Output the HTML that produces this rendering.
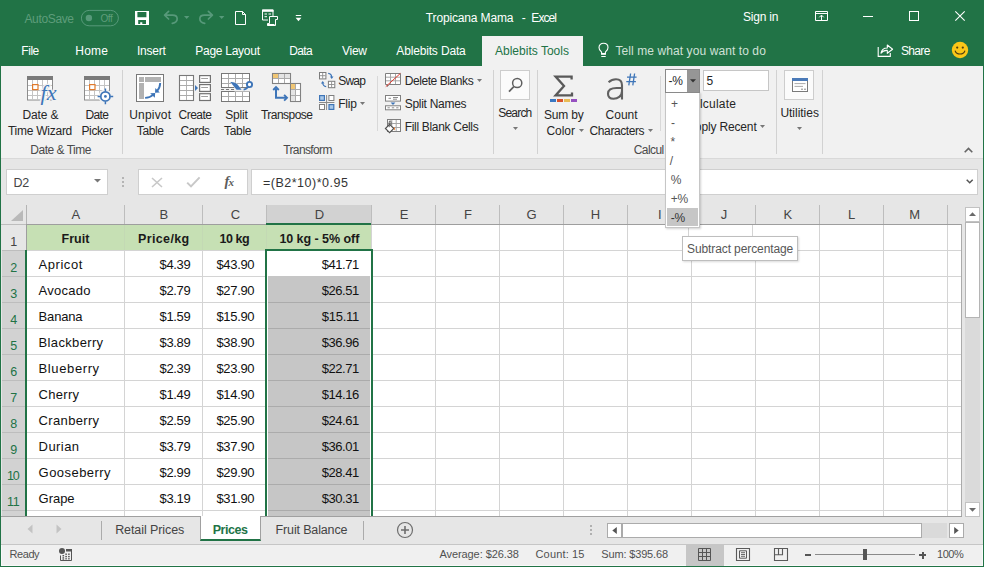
<!DOCTYPE html>
<html><head><meta charset="utf-8"><title>Excel</title>
<style>
html,body{margin:0;padding:0;}
body{width:984px;height:567px;overflow:hidden;position:relative;background:#f1f1f1;font-family:'Liberation Sans', sans-serif;}
.t{position:absolute;white-space:pre;}
.a{position:absolute;}
svg{position:absolute;overflow:visible;}
</style></head><body>
<div class="a" style="left:0px;top:0px;width:984px;height:567px;background:#217346;"></div>
<div class="a" style="left:1px;top:66px;width:982px;height:92px;background:#f1f1f1;"></div>
<div class="a" style="left:482px;top:36px;width:101px;height:31px;background:#f1f1f1;"></div>
<div class="a" style="left:1px;top:158px;width:982px;height:1px;background:#d9d9d9;"></div>
<div class="a" style="left:1px;top:159px;width:982px;height:358px;background:#e6e6e6;"></div>
<div class="a" style="left:6px;top:169px;width:102px;height:26px;background:#fff;border:1px solid #cfcfcf;box-sizing:border-box;"></div>
<div class="a" style="left:138px;top:169px;width:110px;height:26px;background:#fff;border:1px solid #cfcfcf;box-sizing:border-box;"></div>
<div class="a" style="left:251px;top:169px;width:727px;height:26px;background:#fff;border:1px solid #cfcfcf;box-sizing:border-box;"></div>
<div class="a" style="left:26px;top:225px;width:935px;height:291px;background:#fff;"></div>
<div class="a" style="left:26px;top:225px;width:345px;height:25px;background:#c6e0b4;"></div>
<div class="a" style="left:266px;top:205px;width:105px;height:19px;background:#d2d2d2;"></div>
<div class="a" style="left:2px;top:251px;width:24px;height:265px;background:#d2d2d2;"></div>
<div class="a" style="left:124px;top:225px;width:1px;height:291px;background:#d4d4d4;"></div>
<div class="a" style="left:124px;top:205px;width:1px;height:19px;background:#bdbdbd;"></div>
<div class="a" style="left:202px;top:225px;width:1px;height:291px;background:#d4d4d4;"></div>
<div class="a" style="left:202px;top:205px;width:1px;height:19px;background:#bdbdbd;"></div>
<div class="a" style="left:266px;top:225px;width:1px;height:291px;background:#d4d4d4;"></div>
<div class="a" style="left:266px;top:205px;width:1px;height:19px;background:#bdbdbd;"></div>
<div class="a" style="left:371px;top:225px;width:1px;height:291px;background:#d4d4d4;"></div>
<div class="a" style="left:371px;top:205px;width:1px;height:19px;background:#bdbdbd;"></div>
<div class="a" style="left:435px;top:225px;width:1px;height:291px;background:#d4d4d4;"></div>
<div class="a" style="left:435px;top:205px;width:1px;height:19px;background:#bdbdbd;"></div>
<div class="a" style="left:499px;top:225px;width:1px;height:291px;background:#d4d4d4;"></div>
<div class="a" style="left:499px;top:205px;width:1px;height:19px;background:#bdbdbd;"></div>
<div class="a" style="left:563px;top:225px;width:1px;height:291px;background:#d4d4d4;"></div>
<div class="a" style="left:563px;top:205px;width:1px;height:19px;background:#bdbdbd;"></div>
<div class="a" style="left:627px;top:225px;width:1px;height:291px;background:#d4d4d4;"></div>
<div class="a" style="left:627px;top:205px;width:1px;height:19px;background:#bdbdbd;"></div>
<div class="a" style="left:691px;top:225px;width:1px;height:291px;background:#d4d4d4;"></div>
<div class="a" style="left:691px;top:205px;width:1px;height:19px;background:#bdbdbd;"></div>
<div class="a" style="left:755px;top:225px;width:1px;height:291px;background:#d4d4d4;"></div>
<div class="a" style="left:755px;top:205px;width:1px;height:19px;background:#bdbdbd;"></div>
<div class="a" style="left:819px;top:225px;width:1px;height:291px;background:#d4d4d4;"></div>
<div class="a" style="left:819px;top:205px;width:1px;height:19px;background:#bdbdbd;"></div>
<div class="a" style="left:883px;top:225px;width:1px;height:291px;background:#d4d4d4;"></div>
<div class="a" style="left:883px;top:205px;width:1px;height:19px;background:#bdbdbd;"></div>
<div class="a" style="left:947px;top:225px;width:1px;height:291px;background:#d4d4d4;"></div>
<div class="a" style="left:947px;top:205px;width:1px;height:19px;background:#bdbdbd;"></div>
<div class="a" style="left:26px;top:250px;width:935px;height:1px;background:#d4d4d4;"></div>
<div class="a" style="left:2px;top:250px;width:24px;height:1px;background:#bdbdbd;"></div>
<div class="a" style="left:26px;top:276px;width:935px;height:1px;background:#d4d4d4;"></div>
<div class="a" style="left:2px;top:276px;width:24px;height:1px;background:#bdbdbd;"></div>
<div class="a" style="left:26px;top:302px;width:935px;height:1px;background:#d4d4d4;"></div>
<div class="a" style="left:2px;top:302px;width:24px;height:1px;background:#bdbdbd;"></div>
<div class="a" style="left:26px;top:328px;width:935px;height:1px;background:#d4d4d4;"></div>
<div class="a" style="left:2px;top:328px;width:24px;height:1px;background:#bdbdbd;"></div>
<div class="a" style="left:26px;top:354px;width:935px;height:1px;background:#d4d4d4;"></div>
<div class="a" style="left:2px;top:354px;width:24px;height:1px;background:#bdbdbd;"></div>
<div class="a" style="left:26px;top:380px;width:935px;height:1px;background:#d4d4d4;"></div>
<div class="a" style="left:2px;top:380px;width:24px;height:1px;background:#bdbdbd;"></div>
<div class="a" style="left:26px;top:406px;width:935px;height:1px;background:#d4d4d4;"></div>
<div class="a" style="left:2px;top:406px;width:24px;height:1px;background:#bdbdbd;"></div>
<div class="a" style="left:26px;top:432px;width:935px;height:1px;background:#d4d4d4;"></div>
<div class="a" style="left:2px;top:432px;width:24px;height:1px;background:#bdbdbd;"></div>
<div class="a" style="left:26px;top:458px;width:935px;height:1px;background:#d4d4d4;"></div>
<div class="a" style="left:2px;top:458px;width:24px;height:1px;background:#bdbdbd;"></div>
<div class="a" style="left:26px;top:484px;width:935px;height:1px;background:#d4d4d4;"></div>
<div class="a" style="left:2px;top:484px;width:24px;height:1px;background:#bdbdbd;"></div>
<div class="a" style="left:26px;top:510px;width:935px;height:1px;background:#d4d4d4;"></div>
<div class="a" style="left:2px;top:510px;width:24px;height:1px;background:#bdbdbd;"></div>
<div class="a" style="left:124px;top:225px;width:1px;height:25px;background:#c3d9b4;"></div>
<div class="a" style="left:202px;top:225px;width:1px;height:25px;background:#c3d9b4;"></div>
<div class="a" style="left:266px;top:225px;width:1px;height:25px;background:#c3d9b4;"></div>
<div class="a" style="left:686px;top:225px;width:74px;height:11px;background:#fff;"></div>
<div class="a" style="left:688px;top:225px;width:1px;height:11px;background:#d4d4d4;"></div>
<div class="a" style="left:752px;top:225px;width:1px;height:11px;background:#d4d4d4;"></div>
<div class="a" style="left:1px;top:224px;width:25px;height:1px;background:#bdbdbd;"></div>
<div class="a" style="left:26px;top:224px;width:935px;height:1px;background:#9e9e9e;"></div>
<div class="a" style="left:26px;top:205px;width:1px;height:19px;background:#b4b4b4;"></div>
<div class="a" style="left:26px;top:224px;width:1px;height:292px;background:#9e9e9e;"></div>
<div class="a" style="left:961px;top:224px;width:1px;height:293px;background:#ababab;"></div>
<div class="a" style="left:1px;top:516px;width:982px;height:1px;background:#a0a0a0;"></div>
<div class="a" style="left:267px;top:251px;width:1px;height:265px;background:#fff;"></div>
<div class="a" style="left:370px;top:251px;width:1px;height:265px;background:#fff;"></div>
<div class="a" style="left:268px;top:276px;width:102px;height:240px;background:#c6c6c6;"></div>
<div class="a" style="left:268px;top:302px;width:102px;height:1px;background:#ababab;"></div>
<div class="a" style="left:268px;top:328px;width:102px;height:1px;background:#ababab;"></div>
<div class="a" style="left:268px;top:354px;width:102px;height:1px;background:#ababab;"></div>
<div class="a" style="left:268px;top:380px;width:102px;height:1px;background:#ababab;"></div>
<div class="a" style="left:268px;top:406px;width:102px;height:1px;background:#ababab;"></div>
<div class="a" style="left:268px;top:432px;width:102px;height:1px;background:#ababab;"></div>
<div class="a" style="left:268px;top:458px;width:102px;height:1px;background:#ababab;"></div>
<div class="a" style="left:268px;top:484px;width:102px;height:1px;background:#ababab;"></div>
<div class="a" style="left:268px;top:510px;width:102px;height:1px;background:#ababab;"></div>
<div class="a" style="left:268px;top:536px;width:102px;height:1px;background:#ababab;"></div>
<div class="a" style="left:265px;top:249px;width:107px;height:2px;background:#217346;"></div>
<div class="a" style="left:265px;top:249px;width:2px;height:267px;background:#217346;"></div>
<div class="a" style="left:371px;top:249px;width:2px;height:267px;background:#217346;"></div>
<div class="a" style="left:266px;top:223px;width:105px;height:2px;background:#217346;"></div>
<div class="a" style="left:25px;top:250px;width:2px;height:266px;background:#217346;"></div>
<svg style="left:11px;top:210px" width="12" height="11"><path d="M12 0V11H0Z" fill="#b9b9b9"/></svg>
<div class="a" style="left:962px;top:205px;width:21px;height:312px;background:#e6e6e6;"></div>
<div class="a" style="left:965px;top:207px;width:15px;height:15px;background:#fff;border:1px solid #c2c2c2;box-sizing:border-box;"></div>
<svg style="left:969px;top:212px" width="7" height="4"><path d="M0 4L3.5 0.2L7 4Z" fill="#6a6a6a"/></svg>
<div class="a" style="left:965px;top:222px;width:15px;height:96px;background:#fff;border:1px solid #b4b4b4;box-sizing:border-box;"></div>
<div class="a" style="left:965px;top:318px;width:15px;height:184px;background:#dadada;"></div>
<div class="a" style="left:965px;top:502px;width:15px;height:15px;background:#fff;border:1px solid #c2c2c2;box-sizing:border-box;"></div>
<svg style="left:969px;top:508px" width="7" height="4"><path d="M0 0L3.5 3.8L7 0Z" fill="#6a6a6a"/></svg>
<div class="a" style="left:1px;top:517px;width:982px;height:27px;background:#e6e6e6;"></div>
<div class="a" style="left:1px;top:544px;width:982px;height:1px;background:#c6c6c6;"></div>
<div class="a" style="left:1px;top:545px;width:982px;height:21px;background:#f0f0f0;"></div>
<div class="a" style="left:1px;top:565px;width:982px;height:1px;background:#f9f9f9;"></div>
<div class="a" style="left:1px;top:545px;width:1px;height:21px;background:#f9f9f9;"></div>
<div class="a" style="left:982px;top:545px;width:1px;height:21px;background:#f9f9f9;"></div>
<svg style="left:27px;top:524px" width="6" height="10"><path d="M5.5 0.5V9.5L0.5 5Z" fill="#c3c3c3"/></svg>
<svg style="left:56px;top:524px" width="6" height="10"><path d="M0.5 0.5V9.5L5.5 5Z" fill="#c3c3c3"/></svg>
<div class="a" style="left:101px;top:521px;width:1px;height:19px;background:#ababab;"></div>
<div class="a" style="left:363px;top:521px;width:1px;height:19px;background:#ababab;"></div>
<div class="a" style="left:200px;top:516px;width:61px;height:25px;background:#fff;border-left:1px solid #a0a0a0;border-right:1px solid #a0a0a0;border-bottom:2px solid #217346;box-sizing:border-box;"></div>
<svg style="left:396px;top:521px" width="18" height="18"><circle cx="9" cy="9" r="7.5" fill="none" stroke="#6e6e6e" stroke-width="1.2"/><path d="M9 5V13M5 9H13" stroke="#6e6e6e" stroke-width="1.6" fill="none"/></svg>
<svg style="left:590px;top:525px" width="3" height="11"><rect x="0" y="0" width="2" height="2" fill="#b0b0b0"/><rect x="0" y="4" width="2" height="2" fill="#b0b0b0"/><rect x="0" y="8" width="2" height="2" fill="#b0b0b0"/></svg>
<div class="a" style="left:607px;top:523px;width:15px;height:15px;background:#fff;border:1px solid #ababab;box-sizing:border-box;"></div>
<svg style="left:612px;top:527px" width="5" height="7"><path d="M4.8 0V7L0.3 3.5Z" fill="#555"/></svg>
<div class="a" style="left:622px;top:523px;width:300px;height:15px;background:#fff;border:1px solid #ababab;box-sizing:border-box;"></div>
<div class="a" style="left:922px;top:523px;width:25px;height:15px;background:#dadada;"></div>
<div class="a" style="left:949px;top:523px;width:15px;height:15px;background:#fff;border:1px solid #ababab;box-sizing:border-box;"></div>
<svg style="left:954px;top:527px" width="5" height="7"><path d="M0.2 0V7L4.7 3.5Z" fill="#555"/></svg>
<svg style="left:59px;top:548px" width="13" height="13"><circle cx="3" cy="3" r="3" fill="#555"/><path d="M7.5 1.5H12.5V12.5H1.5V7.5" fill="none" stroke="#555" stroke-width="1"/><rect x="7" y="1" width="6" height="2.5" fill="#555"/>
<g fill="#555"><rect x="3.5" y="7" width="1.6" height="1.4"/><rect x="6.3" y="5.5" width="1.6" height="1.4"/><rect x="9.1" y="5.5" width="1.6" height="1.4"/><rect x="3.5" y="9.2" width="1.6" height="1.4"/><rect x="6.3" y="7.9" width="1.6" height="1.4"/><rect x="9.1" y="7.9" width="1.6" height="1.4"/><rect x="6.3" y="10.2" width="1.6" height="1.2"/><rect x="9.1" y="10.2" width="1.6" height="1.2"/><rect x="3.5" y="10.9" width="1.6" height="0.8"/></g></svg>
<div class="a" style="left:686px;top:545px;width:38px;height:21px;background:#c6c6c6;"></div>
<svg style="left:698px;top:548px" width="13" height="13"><path d="M0.5 0.5H12.5V12.5H0.5ZM4.5 0.5V12.5M8.5 0.5V12.5M0.5 4.5H12.5M0.5 8.5H12.5" fill="none" stroke="#555" stroke-width="1"/></svg>
<svg style="left:736px;top:548px" width="14" height="13"><path d="M0.5 0.5H13.5V12.5H0.5Z" fill="none" stroke="#5a5a5a" stroke-width="1.1"/><path d="M3.5 2.8H10.5V10.2H3.5Z" fill="none" stroke="#5a5a5a"/><path d="M5 4.7H9M5 6.5H9M5 8.3H9" stroke="#5a5a5a" stroke-width="0.9"/></svg>
<svg style="left:774px;top:548px" width="14" height="13"><path d="M0.5 0.5H13.5V12.5H0.5Z" fill="none" stroke="#5a5a5a" stroke-width="1.1"/><path d="M4.5 0.5V6.8M8.5 0.5V6.8H0.5" fill="none" stroke="#5a5a5a" stroke-width="1.1"/></svg>
<div class="a" style="left:805px;top:554px;width:6px;height:2px;background:#555;"></div>
<div class="a" style="left:815px;top:554px;width:100px;height:1px;background:#8a8a8a;"></div>
<div class="a" style="left:863px;top:549px;width:4px;height:11px;background:#555;"></div>
<div class="a" style="left:919px;top:554px;width:7px;height:2px;background:#555;"></div>
<div class="a" style="left:921.5px;top:551.5px;width:2px;height:7px;background:#555;"></div>
<svg style="left:80px;top:9px" width="40" height="18" viewBox="0 0 40 18"><rect x="1.4" y="1.4" width="37" height="15.4" rx="7.7" fill="none" stroke="#57997a" stroke-width="1"/><circle cx="8.9" cy="9" r="3.2" fill="#57997a"/></svg>
<svg style="left:135px;top:11px" width="14" height="14" viewBox="0 0 14 14"><path d="M0 0H14V14H0Z M2.4 1V6.3H11.4V1Z M3.2 9V13H5.2V11.3H7.3V13H11V9Z" fill="#fff" fill-rule="evenodd"/></svg>
<svg style="left:163px;top:10px" width="16" height="15" viewBox="0 0 16 15"><path d="M5.6 1.4L1.6 5.2L5.6 9M1.8 5.2H9.5C15.5 5.2 16 12.2 9.3 13.4" fill="none" stroke="#57997a" stroke-width="1.7" stroke-linecap="round" stroke-linejoin="round"/></svg>
<svg style="left:184px;top:16px" width="5.4" height="3" viewBox="0 0 5.4 3"><path d="M0 0H5.4L2.7 3Z" fill="#57997a"/></svg>
<svg style="left:198px;top:10px" width="16" height="15" viewBox="0 0 16 15"><path d="M10.4 1.4L14.4 5.2L10.4 9M14.2 5.2H6.5C0.5 5.2 0 12.2 6.7 13.4" fill="none" stroke="#57997a" stroke-width="1.7" stroke-linecap="round" stroke-linejoin="round"/></svg>
<svg style="left:219px;top:16px" width="5.4" height="3" viewBox="0 0 5.4 3"><path d="M0 0H5.4L2.7 3Z" fill="#57997a"/></svg>
<svg style="left:234px;top:11px" width="13" height="15" viewBox="0 0 13 15"><path d="M1.5 0.5H8.5L11.5 3.5V13.5H1.5Z M8.5 0.5V3.5H11.5" fill="none" stroke="#fff" stroke-width="1"/></svg>
<svg style="left:262px;top:9px" width="17" height="18" viewBox="0 0 17 18"><path d="M0.5 1H11V11H0.5Z" fill="none" stroke="#fff" stroke-width="1"/><rect x="0" y="0.6" width="11.5" height="2.2" fill="#fff"/><path d="M2.5 5H5M6.5 5H9M2.5 7.7H5" stroke="#fff" stroke-width="1" fill="none"/><rect x="6" y="7" width="10" height="10" fill="#217346"/><path d="M7.5 7.5H15.5V10.5H13.5V16.5H5.5V14.5H7.5Z" fill="#217346" stroke="#fff" stroke-width="1"/><rect x="5.5" y="15" width="7" height="1.8" fill="#fff"/></svg>
<svg style="left:295px;top:14px" width="7" height="8" viewBox="0 0 7 8"><rect x="0.8" y="1" width="5.4" height="1" fill="#fff"/><path d="M0.6 3.8H6.4L3.5 7.2Z" fill="#fff"/></svg>
<svg style="left:815px;top:11px" width="13" height="10" viewBox="0 0 13 10"><path d="M0.5 0.5H12.5V9.5H0.5Z" fill="none" stroke="#fff"/><path d="M0.5 2.5H12.5" stroke="#fff"/><path d="M6.5 9V4.3M4.3 6.3L6.5 4.1L8.7 6.3" stroke="#fff" fill="none"/></svg>
<div class="a" style="left:863px;top:16px;width:10px;height:1px;background:#fff;"></div>
<div class="a" style="left:909px;top:11px;width:10px;height:10px;background:transparent;border:1px solid #fff;box-sizing:border-box;"></div>
<svg style="left:955px;top:11px" width="10" height="10" viewBox="0 0 10 10"><path d="M0.3 0.3L9.7 9.7M9.7 0.3L0.3 9.7" stroke="#fff" stroke-width="1.1" fill="none"/></svg>
<svg style="left:598px;top:42px" width="11" height="16" viewBox="0 0 11 16"><path d="M3.6 11.6V10.2C2.6 8.8 1 7.8 1 5.4C1 2.9 3 1.3 5.5 1.3C8 1.3 10 2.9 10 5.4C10 7.8 8.4 8.8 7.4 10.2V11.6Z" fill="none" stroke="#fff" stroke-width="1.1"/><rect x="3.1" y="11" width="4.8" height="1.8" fill="#fff"/><rect x="3.3" y="14" width="4.4" height="1" fill="#fff"/></svg>
<svg style="left:877px;top:43px" width="17" height="15" viewBox="0 0 17 15"><path d="M1.2 4V13.4H13.3V10" fill="none" stroke="#fff" stroke-width="1.1"/><path d="M4 10.2C4.5 6.8 7 5 10.3 5V2L15.6 6.2L10.3 10.3V7.4C7.6 7.2 5.5 8 4 10.2Z" fill="none" stroke="#fff" stroke-width="1.1" stroke-linejoin="round"/></svg>
<svg style="left:951px;top:41px" width="18" height="18" viewBox="0 0 18 18"><circle cx="9" cy="9" r="8.2" fill="#fbc718"/><circle cx="6.2" cy="6.6" r="1.1" fill="#4d3d12"/><circle cx="11.8" cy="6.6" r="1.1" fill="#4d3d12"/><path d="M4.2 10C5.5 14 12.5 14 13.8 10" fill="none" stroke="#4d3d12" stroke-width="1.1" stroke-linecap="round"/></svg>
<div class="a" style="left:122px;top:70px;width:1px;height:84px;background:#d2d2d2;"></div>
<div class="a" style="left:493px;top:70px;width:1px;height:84px;background:#d2d2d2;"></div>
<div class="a" style="left:537px;top:70px;width:1px;height:84px;background:#d2d2d2;"></div>
<div class="a" style="left:776px;top:70px;width:1px;height:84px;background:#d2d2d2;"></div>
<div class="a" style="left:822px;top:70px;width:1px;height:84px;background:#d2d2d2;"></div>
<div class="a" style="left:377px;top:76px;width:1px;height:55px;background:#d8d8d8;"></div>
<div class="a" style="left:660px;top:76px;width:1px;height:55px;background:#d8d8d8;"></div>
<svg style="left:964px;top:147px" width="9" height="6" viewBox="0 0 9 6"><path d="M0.7 5.3L4.5 1.5L8.3 5.3" fill="none" stroke="#666" stroke-width="1.6"/></svg>
<svg style="left:27px;top:76px" width="30" height="29" viewBox="0 0 30 29"><rect x="0.5" y="0.5" width="25" height="23.5" fill="#fff" stroke="#8c8c8c"/><rect x="0" y="0" width="26" height="4" fill="#7a7a7a"/><path d="M5.5 4V24" stroke="#c4c4c4"/><path d="M10.5 4V24" stroke="#c4c4c4"/><path d="M15.5 4V24" stroke="#c4c4c4"/><path d="M20.5 4V24" stroke="#c4c4c4"/><path d="M1 9.5H25" stroke="#c4c4c4"/><path d="M1 14.5H25" stroke="#c4c4c4"/><path d="M1 19.5H25" stroke="#c4c4c4"/><rect x="5.6" y="8.6" width="5.4" height="5" fill="#fff" stroke="#e07a2c" stroke-width="1.2"/><text x="13.5" y="23.6" textLength="16" lengthAdjust="spacingAndGlyphs" font-family="Liberation Serif" font-style="italic" font-size="20.5" fill="#3e75b8" stroke="#f1f1f1" stroke-width="2.6" stroke-linejoin="round">fx</text><text x="13.5" y="23.6" textLength="16" lengthAdjust="spacingAndGlyphs" font-family="Liberation Serif" font-style="italic" font-size="20.5" fill="#3e75b8">fx</text></svg>
<svg style="left:84px;top:76px" width="30" height="29" viewBox="0 0 30 29"><rect x="0.5" y="0.5" width="25" height="23.5" fill="#fff" stroke="#8c8c8c"/><rect x="0" y="0" width="26" height="4" fill="#7a7a7a"/><path d="M5.5 4V24" stroke="#c4c4c4"/><path d="M10.5 4V24" stroke="#c4c4c4"/><path d="M15.5 4V24" stroke="#c4c4c4"/><path d="M20.5 4V24" stroke="#c4c4c4"/><path d="M1 9.5H25" stroke="#c4c4c4"/><path d="M1 14.5H25" stroke="#c4c4c4"/><path d="M1 19.5H25" stroke="#c4c4c4"/><rect x="5.6" y="8.6" width="5.4" height="5" fill="#fff" stroke="#e07a2c" stroke-width="1.2"/><circle cx="21.4" cy="20.4" r="7" fill="#f1f1f1"/><circle cx="21.4" cy="20.4" r="4.6" fill="#fff" stroke="#3e75b8" stroke-width="1.7"/><circle cx="21.4" cy="20.4" r="1.4" fill="#3e75b8"/><path d="M21.4 12.6V15.6M21.4 25.2V28.2M13.6 20.4H16.6M26.2 20.4H29.2" stroke="#3e75b8" stroke-width="1.5"/></svg>
<svg style="left:136px;top:74px" width="28" height="28" viewBox="0 0 28 28"><rect x="0.5" y="0.5" width="27" height="27" fill="#fff" stroke="#787878"/><rect x="3" y="3" width="5" height="5" fill="#b2b2b2"/><rect x="9" y="3" width="16" height="5" fill="#b2b2b2"/><rect x="3" y="9" width="5" height="16" fill="#b2b2b2"/><path d="M9.1 23.9C12.5 23.7 15.2 22.6 17 20.8" fill="none" stroke="#3e75b8" stroke-width="1.9"/><path d="M19.2 18.9L14.2 19.3L18.8 23.7Z" fill="#3e75b8"/><path d="M24.2 9C24 12.6 23 15 21.2 16.8" fill="none" stroke="#3e75b8" stroke-width="1.9"/><path d="M19 18.8L19.3 14L23.8 18.4Z" fill="#3e75b8"/></svg>
<svg style="left:179px;top:75px" width="32" height="26" viewBox="0 0 32 26"><rect x="0.5" y="0.5" width="14" height="25" fill="#fff" stroke="#787878" stroke-width="1.1"/><path d="M7.5 1V25" stroke="#b4b4b4"/><path d="M1 5.5H14" stroke="#ababab"/><path d="M1 10.5H14" stroke="#ababab"/><path d="M1 15.5H14" stroke="#ababab"/><path d="M1 20.5H14" stroke="#ababab"/><path d="M16 10V16L19 13Z" fill="#3e75b8"/><rect x="20.6" y="0.6" width="10.8" height="6.8" fill="#fff" stroke="#727272" stroke-width="1.2"/><path d="M22.2 3.5H29" stroke="#a0a0a0"/><rect x="20.6" y="9.6" width="10.8" height="6.8" fill="#fff" stroke="#727272" stroke-width="1.2"/><path d="M22.2 12.5H29" stroke="#a0a0a0"/><rect x="20.6" y="18.7" width="10.8" height="6.8" fill="#fff" stroke="#727272" stroke-width="1.2"/><path d="M22.2 21.5H29" stroke="#a0a0a0"/></svg>
<svg style="left:221px;top:73px" width="32" height="29" viewBox="0 0 32 29"><rect x="0.5" y="0.5" width="28" height="14" fill="#fff" stroke="#787878"/><path d="M7.5 1V14" stroke="#ababab"/><path d="M7.5 19V28" stroke="#ababab"/><path d="M14.5 1V14" stroke="#ababab"/><path d="M14.5 19V28" stroke="#ababab"/><path d="M21.5 1V14" stroke="#ababab"/><path d="M21.5 19V28" stroke="#ababab"/><path d="M1 5.5H28M1 10.5H28" stroke="#ababab"/><rect x="0.5" y="18.5" width="28" height="10" fill="#fff" stroke="#787878"/><path d="M1 23.5H28" stroke="#ababab"/><path d="M7.5 19V28" stroke="#ababab"/><path d="M14.5 19V28" stroke="#ababab"/><path d="M21.5 19V28" stroke="#ababab"/><rect x="13.5" y="15" width="16" height="3.5" fill="#f1f1f1"/><path d="M0 16.5H13" stroke="#787878" stroke-width="1.1" stroke-dasharray="3 2"/><path d="M9.3 9C12.5 8.8 15 10 16.5 11.6L20.6 16.7L15.6 16.8Z" fill="#3e75b8" stroke="#f4f4f4" stroke-width="1" paint-order="stroke"/><path d="M22.6 16.6C25 16.4 26.3 15.3 27 13.5" stroke="#3e75b8" stroke-width="1.8" fill="none"/><circle cx="28.5" cy="11.5" r="2.6" fill="#fff" stroke="#3e75b8" stroke-width="1.9"/></svg>
<svg style="left:272px;top:73px" width="30" height="29" viewBox="0 0 30 29"><rect x="0.5" y="0.5" width="18" height="10" fill="#fff" stroke="#828282" stroke-width="1.1"/><rect x="1" y="1" width="5.2" height="4.2" fill="#f0c674"/><rect x="7" y="1" width="11" height="4.2" fill="#e4e4e4"/><path d="M6.5 1V10M12.5 1V10M1 5.5H18" stroke="#ababab"/><rect x="18.5" y="10.5" width="10" height="18" fill="#fff" stroke="#828282" stroke-width="1.1"/><rect x="19" y="11" width="4.2" height="5.2" fill="#f0c674"/><rect x="19" y="17" width="4.2" height="11" fill="#e4e4e4"/><path d="M23.5 11V28M19 16.5H28M19 22.5H28" stroke="#ababab"/><path d="M4 15.4V24.8H14.2" fill="none" stroke="#3e75b8" stroke-width="2"/><path d="M1.2 17L4 14.2L6.8 17M12.1 21.9L15 24.8L12.1 27.7" fill="none" stroke="#3e75b8" stroke-width="1.9"/></svg>
<svg style="left:319px;top:72px" width="16" height="16" viewBox="0 0 16 16"><rect x="0.5" y="0.5" width="6.4" height="6.4" fill="#fff" stroke="#7c7c7c"/><path d="M3.7 1V6.5M1 3.7H6.5" stroke="#8c8c8c" stroke-width="0.9"/><rect x="9.4" y="9.3" width="6.4" height="6.4" fill="#fff" stroke="#7c7c7c"/><path d="M12.6 9.8V15.3M9.9 12.5H15.4" stroke="#8c8c8c" stroke-width="0.9"/><path d="M9.2 1.4C11.4 1.6 12.6 3 12.7 5.2" fill="none" stroke="#3e75b8" stroke-width="1.1"/><path d="M10.9 4.6L12.7 7L14.5 4.6Z" fill="#3e75b8"/><path d="M7.2 14.6C5 14.4 3.8 13 3.7 10.8" fill="none" stroke="#3e75b8" stroke-width="1.1"/><path d="M1.9 11.4L3.7 9L5.5 11.4Z" fill="#3e75b8"/></svg>
<svg style="left:319px;top:95px" width="16" height="15" viewBox="0 0 16 15"><path d="M7.6 0V15M0 7.5H15.4" stroke="#8a8a8a" stroke-width="1"/><rect x="0.6" y="0.6" width="4.8" height="4.8" fill="#a9c8e8" stroke="#3e75b8" stroke-width="1.2"/><rect x="9.9" y="0.5" width="5" height="5" fill="#fff" stroke="#7f7f7f"/><rect x="0.5" y="9.5" width="5" height="5" fill="#fff" stroke="#7f7f7f"/><rect x="10" y="9.6" width="4.8" height="4.8" fill="#a9c8e8" stroke="#3e75b8" stroke-width="1.2"/></svg>
<svg style="left:360px;top:102px" width="5" height="3" viewBox="0 0 5 3"><path d="M0 0H5L2.5 3Z" fill="#777"/></svg>
<svg style="left:385px;top:73px" width="16" height="14" viewBox="0 0 16 14"><path d="M0.5 0.5H15.5V11.5H4L2.5 13.5V11.5H0.5Z" fill="#fff" stroke="#7f7f7f"/><path d="M5.5 1V11M10.5 1V11M1 4.2H15M1 7.8H15" stroke="#a6a6a6"/><path d="M0.8 13.6L15.4 0.4" stroke="#e2382c" stroke-width="1"/></svg>
<svg style="left:477px;top:79px" width="5" height="3" viewBox="0 0 5 3"><path d="M0 0H5L2.5 3Z" fill="#777"/></svg>
<svg style="left:385px;top:95px" width="16" height="16" viewBox="0 0 16 16"><rect x="0.5" y="0.5" width="15" height="5.6" fill="#fff" stroke="#7f7f7f"/><path d="M3.5 3.3H6M8 2.5H13M8 4.2H12" stroke="#7f7f7f" stroke-width="0.9"/><path d="M5.6 7.6H10.4L8 10Z" fill="#3e75b8"/><rect x="0.5" y="10.8" width="15" height="4" fill="#fff" stroke="#7f7f7f"/><path d="M2.5 12.8H4.8M6.8 12.8H9.2M11.2 12.8H13.5" stroke="#7f7f7f" stroke-width="0.9"/></svg>
<svg style="left:385px;top:119px" width="17" height="15" viewBox="0 0 17 15"><rect x="2.5" y="0.5" width="13" height="12" fill="#fff" stroke="#7f7f7f"/><path d="M6.8 1V12M11.2 1V12M3 4.5H15M3 8.5H15" stroke="#a6a6a6"/><path d="M4.6 5.3L8.8 9.5L4.6 13.7L0.4 9.5Z" fill="#fff" stroke="#505050" stroke-width="1.1"/><path d="M4.2 8.2V3C4.2 1.4 6 1.4 6 3V6" fill="none" stroke="#505050" stroke-width="0.9"/><path d="M8.9 7.8C10.2 9 10.4 10.4 9.7 11.6L8.9 10Z" fill="#ed7d31"/></svg>
<div class="a" style="left:500px;top:70px;width:30px;height:30px;background:#fbfbfb;border:1px solid #cdcdcd;box-sizing:border-box;"></div>
<svg style="left:508px;top:77px" width="15" height="16" viewBox="0 0 15 16"><circle cx="9.2" cy="6" r="4.6" fill="none" stroke="#5f5f5f" stroke-width="1.5"/><path d="M5.8 9.6L1 14.6" stroke="#5f5f5f" stroke-width="1.7"/></svg>
<svg style="left:513px;top:127px" width="5" height="3" viewBox="0 0 5 3"><path d="M0 0H5L2.5 3Z" fill="#777"/></svg>
<svg style="left:554px;top:75px" width="20" height="22" viewBox="0 0 20 22"><path d="M17.6 4.4V1.6H1.6L10 11L1.6 20.4H18V17.6" fill="none" stroke="#595959" stroke-width="2.3" stroke-linejoin="miter"/></svg>
<div class="a" style="left:550px;top:99px;width:6px;height:3px;background:#3b78c2;"></div>
<div class="a" style="left:557px;top:99px;width:6px;height:3px;background:#d9532c;"></div>
<div class="a" style="left:564px;top:99px;width:6px;height:3px;background:#e9bc55;"></div>
<div class="a" style="left:571px;top:99px;width:6px;height:3px;background:#9650c0;"></div>
<svg style="left:579px;top:129px" width="5" height="3" viewBox="0 0 5 3"><path d="M0 0H5L2.5 3Z" fill="#777"/></svg>
<svg style="left:606px;top:76px" width="20" height="25" viewBox="0 0 20 25"><path d="M2.6 6.2C5 4 7.5 3.2 10 3.2C14 3.2 16 5.4 16 9.2V23.4M16 12H10.5C5 12 2 14 2 17.8C2 21 4.2 22.8 7.6 22.8C11.5 22.8 16 20.4 16 15" fill="none" stroke="#616161" stroke-width="2.1"/></svg>
<svg style="left:626px;top:73px" width="11" height="13" viewBox="0 0 11 13"><path d="M4.6 0.5L2.8 12.3M8.6 0.5L6.8 12.3M1 4.2H10.6M0.3 8.6H9.9" stroke="#3e75b8" stroke-width="1.3" fill="none"/></svg>
<svg style="left:648px;top:129px" width="5" height="3" viewBox="0 0 5 3"><path d="M0 0H5L2.5 3Z" fill="#777"/></svg>
<div class="a" style="left:665px;top:69px;width:35px;height:24px;background:#fff;z-index:11;border:1px solid #8a8a8a;box-sizing:border-box;"></div>
<div class="a" style="left:687px;top:70px;width:12px;height:22px;background:#969696;z-index:11;"></div>
<svg style="left:690px;top:79px;z-index:12" width="6" height="4" viewBox="0 0 6 4"><path d="M0 0.3H6L3 3.6Z" fill="#333"/></svg>
<div class="a" style="left:703px;top:70px;width:66px;height:21px;background:#fff;border:1px solid #c6c6c6;box-sizing:border-box;"></div>
<svg style="left:760px;top:125px" width="5" height="3" viewBox="0 0 5 3"><path d="M0 0H5L2.5 3Z" fill="#777"/></svg>
<div class="a" style="left:784px;top:70px;width:30px;height:30px;background:#fbfbfb;border:1px solid #cdcdcd;box-sizing:border-box;"></div>
<svg style="left:792px;top:78px" width="16" height="14" viewBox="0 0 16 14"><rect x="0.5" y="0.5" width="15" height="13" fill="#fff" stroke="#7a7a7a"/><rect x="0" y="0" width="16" height="3" fill="#4a7ab8"/><path d="M2.5 5.6H13.5M2.5 8.4H11" stroke="#a0a0a0" stroke-width="0.9"/><path d="M9 11.2H11M12 11.2H14" stroke="#7a7a7a" stroke-width="0.9"/></svg>
<svg style="left:797px;top:127px" width="5" height="3" viewBox="0 0 5 3"><path d="M0 0H5L2.5 3Z" fill="#777"/></svg>
<svg style="left:94px;top:179.4px" width="7" height="3.6" viewBox="0 0 7 3.6"><path d="M0 0H7L3.5 3.6Z" fill="#777"/></svg>
<svg style="left:122px;top:177px" width="2" height="10" viewBox="0 0 2 10"><rect x="0" y="0" width="2" height="2" fill="#b4b4b4"/><rect x="0" y="4" width="2" height="2" fill="#b4b4b4"/><rect x="0" y="8" width="2" height="2" fill="#b4b4b4"/></svg>
<svg style="left:151px;top:177px" width="12" height="11" viewBox="0 0 12 11"><path d="M1 1L11 10M11 1L1 10" stroke="#c8c8c8" stroke-width="1.6" fill="none"/></svg>
<svg style="left:186px;top:176px" width="15" height="12" viewBox="0 0 15 12"><path d="M1.2 6.6L5 10.4L13.6 1.4" stroke="#c8c8c8" stroke-width="2" fill="none"/></svg>
<svg style="left:222px;top:174px" width="15" height="15" viewBox="0 0 15 15"><text x="2.6" y="12" font-family="Liberation Serif" font-style="italic" font-weight="bold" font-size="14.5" fill="#5c5c5c">f</text><text x="6.6" y="12" font-family="Liberation Serif" font-style="italic" font-weight="bold" font-size="11" fill="#5c5c5c">x</text></svg>
<svg style="left:966px;top:179px" width="8" height="5" viewBox="0 0 8 5"><path d="M0.7 0.7L3.7 3.7L6.7 0.7" fill="none" stroke="#555" stroke-width="1.5"/></svg>
<div class="a" style="left:665px;top:92px;width:35px;height:136px;background:#fff;z-index:10;border:1px solid #c6c6c6;box-sizing:border-box;box-shadow:1px 1px 2px rgba(0,0,0,0.18);"></div>
<div class="a" style="left:667px;top:208px;width:31px;height:18px;background:#c6c6c6;z-index:11;"></div>
<div class="a" style="left:682px;top:236px;width:116px;height:25px;background:#fff;z-index:11;border:1px solid #bebebe;box-sizing:border-box;box-shadow:1px 1px 2px rgba(0,0,0,0.15);"></div>
<span class="t" style="left:24.4px;top:12.00px;font-size:12px;line-height:15px;color:#5e9d7b;letter-spacing:-0.34px;">AutoSave</span>
<span class="t" style="left:100.4px;top:13.00px;font-size:10px;line-height:12px;color:#5e9d7b;letter-spacing:-0.43px;">Off</span>
<span class="t" style="left:425.8px;top:11.00px;font-size:12px;line-height:15px;color:#ffffff;letter-spacing:-0.15px;">Tropicana Mama</span>
<span class="t" style="left:521.7px;top:11.00px;font-size:12px;line-height:15px;color:#ffffff;letter-spacing:0.00px;">-</span>
<span class="t" style="left:531.3px;top:11.00px;font-size:12px;line-height:15px;color:#ffffff;letter-spacing:-0.91px;">Excel</span>
<span class="t" style="left:743.0px;top:10.00px;font-size:12px;line-height:15px;color:#ffffff;letter-spacing:-0.20px;">Sign in</span>
<span class="t" style="left:21.3px;top:44.00px;font-size:12px;line-height:15px;color:#ffffff;letter-spacing:-0.45px;">File</span>
<span class="t" style="left:75.3px;top:44.00px;font-size:12px;line-height:15px;color:#ffffff;letter-spacing:0.23px;">Home</span>
<span class="t" style="left:137.0px;top:44.00px;font-size:12px;line-height:15px;color:#ffffff;letter-spacing:-0.24px;">Insert</span>
<span class="t" style="left:195.3px;top:44.00px;font-size:12px;line-height:15px;color:#ffffff;letter-spacing:-0.27px;">Page Layout</span>
<span class="t" style="left:289.3px;top:44.00px;font-size:12px;line-height:15px;color:#ffffff;letter-spacing:-0.65px;">Data</span>
<span class="t" style="left:342.0px;top:44.00px;font-size:12px;line-height:15px;color:#ffffff;letter-spacing:-0.27px;">View</span>
<span class="t" style="left:396.3px;top:44.00px;font-size:12px;line-height:15px;color:#ffffff;letter-spacing:-0.16px;">Ablebits Data</span>
<span class="t" style="left:495.0px;top:44.00px;font-size:12px;line-height:15px;color:#217346;letter-spacing:0.01px;">Ablebits Tools</span>
<span class="t" style="left:615.4px;top:44.00px;font-size:12px;line-height:15px;color:#d0e1d7;letter-spacing:0.09px;">Tell me what you want to do</span>
<span class="t" style="left:901.0px;top:44.00px;font-size:12px;line-height:15px;color:#ffffff;letter-spacing:-0.66px;">Share</span>
<span class="t" style="left:22.6px;top:108.00px;font-size:12px;line-height:15px;color:#262626;letter-spacing:-0.16px;">Date &amp;</span>
<span class="t" style="left:8.0px;top:124.00px;font-size:12px;line-height:15px;color:#262626;letter-spacing:-0.26px;">Time Wizard</span>
<span class="t" style="left:85.4px;top:108.00px;font-size:12px;line-height:15px;color:#262626;letter-spacing:-0.59px;">Date</span>
<span class="t" style="left:81.5px;top:124.00px;font-size:12px;line-height:15px;color:#262626;letter-spacing:-0.39px;">Picker</span>
<span class="t" style="left:30.3px;top:143.00px;font-size:12px;line-height:15px;color:#4a4a4a;letter-spacing:-0.49px;">Date &amp; Time</span>
<span class="t" style="left:129.2px;top:108.00px;font-size:12px;line-height:15px;color:#262626;letter-spacing:0.20px;">Unpivot</span>
<span class="t" style="left:136.8px;top:124.00px;font-size:12px;line-height:15px;color:#262626;letter-spacing:-0.37px;">Table</span>
<span class="t" style="left:178.5px;top:108.00px;font-size:12px;line-height:15px;color:#262626;letter-spacing:-0.51px;">Create</span>
<span class="t" style="left:180.5px;top:124.00px;font-size:12px;line-height:15px;color:#262626;letter-spacing:-0.63px;">Cards</span>
<span class="t" style="left:225.3px;top:108.00px;font-size:12px;line-height:15px;color:#262626;letter-spacing:-0.19px;">Split</span>
<span class="t" style="left:224.0px;top:124.00px;font-size:12px;line-height:15px;color:#262626;letter-spacing:-0.32px;">Table</span>
<span class="t" style="left:261.0px;top:108.00px;font-size:12px;line-height:15px;color:#262626;letter-spacing:-0.53px;">Transpose</span>
<span class="t" style="left:338.2px;top:74.00px;font-size:12px;line-height:15px;color:#262626;letter-spacing:-0.78px;">Swap</span>
<span class="t" style="left:338.2px;top:97.00px;font-size:12px;line-height:15px;color:#262626;letter-spacing:-0.18px;">Flip</span>
<span class="t" style="left:283.2px;top:143.00px;font-size:12px;line-height:15px;color:#4a4a4a;letter-spacing:-0.62px;">Transform</span>
<span class="t" style="left:404.7px;top:74.00px;font-size:12px;line-height:15px;color:#262626;letter-spacing:-0.42px;">Delete Blanks</span>
<span class="t" style="left:404.7px;top:97.00px;font-size:12px;line-height:15px;color:#262626;letter-spacing:-0.28px;">Split Names</span>
<span class="t" style="left:404.7px;top:120.00px;font-size:12px;line-height:15px;color:#262626;letter-spacing:-0.31px;">Fill Blank Cells</span>
<span class="t" style="left:498.2px;top:106.00px;font-size:12px;line-height:15px;color:#262626;letter-spacing:-0.79px;">Search</span>
<span class="t" style="left:544.0px;top:108.00px;font-size:12px;line-height:15px;color:#262626;letter-spacing:-0.18px;">Sum by</span>
<span class="t" style="left:546.4px;top:124.00px;font-size:12px;line-height:15px;color:#262626;letter-spacing:-0.02px;">Color</span>
<span class="t" style="left:605.5px;top:108.00px;font-size:12px;line-height:15px;color:#262626;letter-spacing:0.02px;">Count</span>
<span class="t" style="left:589.6px;top:124.00px;font-size:12px;line-height:15px;color:#262626;letter-spacing:-0.41px;">Characters</span>
<span class="t" style="left:633.7px;top:143.00px;font-size:12px;line-height:15px;color:#4a4a4a;letter-spacing:-0.55px;">Calcul</span>
<span class="t" style="left:700.0px;top:97.00px;font-size:12px;line-height:15px;color:#262626;letter-spacing:0.20px;">lculate</span>
<span class="t" style="left:687.0px;top:120.00px;font-size:12px;line-height:15px;color:#262626;letter-spacing:-0.15px;">Apply Recent</span>
<span class="t" style="left:780.4px;top:106.00px;font-size:12px;line-height:15px;color:#262626;letter-spacing:-0.02px;">Utilities</span>
<span class="t" style="left:668.5px;top:74.00px;font-size:12px;line-height:15px;color:#262626;letter-spacing:-0.17px;z-index:12;">-%</span>
<span class="t" style="left:706.4px;top:74.00px;font-size:12px;line-height:15px;color:#262626;letter-spacing:0.00px;">5</span>
<span class="t" style="left:13.6px;top:175.00px;font-size:12.5px;line-height:16px;color:#444;letter-spacing:-0.48px;">D2</span>
<span class="t" style="left:263.0px;top:175.00px;font-size:12.5px;line-height:16px;color:#333;letter-spacing:0.50px;">=(B2*10)*0.95</span>
<span class="t" style="left:71.5px;top:207.00px;font-size:13px;line-height:16px;color:#444;letter-spacing:0.00px;z-index:1;">A</span>
<span class="t" style="left:159.5px;top:207.00px;font-size:13px;line-height:16px;color:#444;letter-spacing:0.00px;z-index:1;">B</span>
<span class="t" style="left:230.8px;top:207.00px;font-size:13px;line-height:16px;color:#444;letter-spacing:0.00px;z-index:1;">C</span>
<span class="t" style="left:314.8px;top:207.00px;font-size:13px;line-height:16px;color:#444;letter-spacing:0.00px;z-index:1;">D</span>
<span class="t" style="left:399.8px;top:207.00px;font-size:13px;line-height:16px;color:#444;letter-spacing:0.00px;z-index:1;">E</span>
<span class="t" style="left:463.9px;top:207.00px;font-size:13px;line-height:16px;color:#444;letter-spacing:0.00px;z-index:1;">F</span>
<span class="t" style="left:526.6px;top:207.00px;font-size:13px;line-height:16px;color:#444;letter-spacing:0.00px;z-index:1;">G</span>
<span class="t" style="left:590.7px;top:207.00px;font-size:13px;line-height:16px;color:#444;letter-spacing:0.00px;z-index:1;">H</span>
<span class="t" style="left:658.0px;top:207.00px;font-size:13px;line-height:16px;color:#444;letter-spacing:0.00px;z-index:1;">I</span>
<span class="t" style="left:720.8px;top:207.00px;font-size:13px;line-height:16px;color:#444;letter-spacing:0.00px;z-index:1;">J</span>
<span class="t" style="left:783.4px;top:207.00px;font-size:13px;line-height:16px;color:#444;letter-spacing:0.00px;z-index:1;">K</span>
<span class="t" style="left:848.1px;top:207.00px;font-size:13px;line-height:16px;color:#444;letter-spacing:0.00px;z-index:1;">L</span>
<span class="t" style="left:909.2px;top:207.00px;font-size:13px;line-height:16px;color:#444;letter-spacing:0.00px;z-index:1;">M</span>
<span class="t" style="left:10.2px;top:234.00px;font-size:12.5px;line-height:16px;color:#444;letter-spacing:0.00px;">1</span>
<span class="t" style="left:10.2px;top:260.00px;font-size:12.5px;line-height:16px;color:#217346;letter-spacing:0.00px;">2</span>
<span class="t" style="left:10.2px;top:286.00px;font-size:12.5px;line-height:16px;color:#217346;letter-spacing:0.00px;">3</span>
<span class="t" style="left:10.2px;top:312.00px;font-size:12.5px;line-height:16px;color:#217346;letter-spacing:0.00px;">4</span>
<span class="t" style="left:10.2px;top:338.00px;font-size:12.5px;line-height:16px;color:#217346;letter-spacing:0.00px;">5</span>
<span class="t" style="left:10.2px;top:364.00px;font-size:12.5px;line-height:16px;color:#217346;letter-spacing:0.00px;">6</span>
<span class="t" style="left:10.2px;top:390.00px;font-size:12.5px;line-height:16px;color:#217346;letter-spacing:0.00px;">7</span>
<span class="t" style="left:10.2px;top:416.00px;font-size:12.5px;line-height:16px;color:#217346;letter-spacing:0.00px;">8</span>
<span class="t" style="left:10.2px;top:442.00px;font-size:12.5px;line-height:16px;color:#217346;letter-spacing:0.00px;">9</span>
<span class="t" style="left:7.0px;top:468.00px;font-size:12.5px;line-height:16px;color:#217346;letter-spacing:-1.20px;">10</span>
<span class="t" style="left:7.0px;top:494.00px;font-size:12.5px;line-height:16px;color:#217346;letter-spacing:-0.28px;">11</span>
<span class="t" style="left:61.6px;top:231.00px;font-size:12.5px;line-height:16px;color:#1a1a1a;letter-spacing:0.00px;font-weight:bold;">Fruit</span>
<span class="t" style="left:138.1px;top:231.00px;font-size:12.5px;line-height:16px;color:#1a1a1a;letter-spacing:0.35px;font-weight:bold;">Price/kg</span>
<span class="t" style="left:219.5px;top:231.00px;font-size:12.5px;line-height:16px;color:#1a1a1a;letter-spacing:-0.47px;font-weight:bold;">10 kg</span>
<span class="t" style="left:279.4px;top:231.00px;font-size:12.5px;line-height:16px;color:#1a1a1a;letter-spacing:-0.05px;font-weight:bold;">10 kg - 5% off</span>
<span class="t" style="left:38.6px;top:257.00px;font-size:13px;line-height:16px;color:#111;letter-spacing:0.54px;">Apricot</span>
<span class="t" style="left:159.6px;top:257.00px;font-size:13px;line-height:16px;color:#111;letter-spacing:-0.36px;">$4.39</span>
<span class="t" style="left:216.4px;top:257.00px;font-size:13px;line-height:16px;color:#111;letter-spacing:-0.31px;">$43.90</span>
<span class="t" style="left:321.7px;top:257.00px;font-size:13px;line-height:16px;color:#111;letter-spacing:-0.43px;">$41.71</span>
<span class="t" style="left:38.6px;top:283.00px;font-size:13px;line-height:16px;color:#111;letter-spacing:0.27px;">Avocado</span>
<span class="t" style="left:159.6px;top:283.00px;font-size:13px;line-height:16px;color:#111;letter-spacing:-0.36px;">$2.79</span>
<span class="t" style="left:216.4px;top:283.00px;font-size:13px;line-height:16px;color:#111;letter-spacing:-0.31px;">$27.90</span>
<span class="t" style="left:321.7px;top:283.00px;font-size:13px;line-height:16px;color:#111;letter-spacing:-0.43px;">$26.51</span>
<span class="t" style="left:38.6px;top:309.00px;font-size:13px;line-height:16px;color:#111;letter-spacing:-0.17px;">Banana</span>
<span class="t" style="left:159.6px;top:309.00px;font-size:13px;line-height:16px;color:#111;letter-spacing:-0.36px;">$1.59</span>
<span class="t" style="left:216.4px;top:309.00px;font-size:13px;line-height:16px;color:#111;letter-spacing:-0.31px;">$15.90</span>
<span class="t" style="left:321.7px;top:309.00px;font-size:13px;line-height:16px;color:#111;letter-spacing:-0.24px;">$15.11</span>
<span class="t" style="left:38.6px;top:335.00px;font-size:13px;line-height:16px;color:#111;letter-spacing:0.34px;">Blackberry</span>
<span class="t" style="left:159.6px;top:335.00px;font-size:13px;line-height:16px;color:#111;letter-spacing:-0.36px;">$3.89</span>
<span class="t" style="left:216.4px;top:335.00px;font-size:13px;line-height:16px;color:#111;letter-spacing:-0.31px;">$38.90</span>
<span class="t" style="left:321.7px;top:335.00px;font-size:13px;line-height:16px;color:#111;letter-spacing:-0.43px;">$36.96</span>
<span class="t" style="left:38.6px;top:361.00px;font-size:13px;line-height:16px;color:#111;letter-spacing:0.61px;">Blueberry</span>
<span class="t" style="left:159.6px;top:361.00px;font-size:13px;line-height:16px;color:#111;letter-spacing:-0.36px;">$2.39</span>
<span class="t" style="left:216.4px;top:361.00px;font-size:13px;line-height:16px;color:#111;letter-spacing:-0.31px;">$23.90</span>
<span class="t" style="left:321.7px;top:361.00px;font-size:13px;line-height:16px;color:#111;letter-spacing:-0.43px;">$22.71</span>
<span class="t" style="left:38.6px;top:387.00px;font-size:13px;line-height:16px;color:#111;letter-spacing:0.30px;">Cherry</span>
<span class="t" style="left:159.6px;top:387.00px;font-size:13px;line-height:16px;color:#111;letter-spacing:-0.36px;">$1.49</span>
<span class="t" style="left:216.4px;top:387.00px;font-size:13px;line-height:16px;color:#111;letter-spacing:-0.31px;">$14.90</span>
<span class="t" style="left:321.7px;top:387.00px;font-size:13px;line-height:16px;color:#111;letter-spacing:-0.43px;">$14.16</span>
<span class="t" style="left:38.6px;top:413.00px;font-size:13px;line-height:16px;color:#111;letter-spacing:0.34px;">Cranberry</span>
<span class="t" style="left:159.6px;top:413.00px;font-size:13px;line-height:16px;color:#111;letter-spacing:-0.36px;">$2.59</span>
<span class="t" style="left:216.4px;top:413.00px;font-size:13px;line-height:16px;color:#111;letter-spacing:-0.31px;">$25.90</span>
<span class="t" style="left:321.7px;top:413.00px;font-size:13px;line-height:16px;color:#111;letter-spacing:-0.43px;">$24.61</span>
<span class="t" style="left:38.6px;top:439.00px;font-size:13px;line-height:16px;color:#111;letter-spacing:0.44px;">Durian</span>
<span class="t" style="left:159.6px;top:439.00px;font-size:13px;line-height:16px;color:#111;letter-spacing:-0.36px;">$3.79</span>
<span class="t" style="left:216.4px;top:439.00px;font-size:13px;line-height:16px;color:#111;letter-spacing:-0.31px;">$37.90</span>
<span class="t" style="left:321.7px;top:439.00px;font-size:13px;line-height:16px;color:#111;letter-spacing:-0.43px;">$36.01</span>
<span class="t" style="left:38.6px;top:465.00px;font-size:13px;line-height:16px;color:#111;letter-spacing:0.45px;">Gooseberry</span>
<span class="t" style="left:159.6px;top:465.00px;font-size:13px;line-height:16px;color:#111;letter-spacing:-0.36px;">$2.99</span>
<span class="t" style="left:216.4px;top:465.00px;font-size:13px;line-height:16px;color:#111;letter-spacing:-0.31px;">$29.90</span>
<span class="t" style="left:321.7px;top:465.00px;font-size:13px;line-height:16px;color:#111;letter-spacing:-0.43px;">$28.41</span>
<span class="t" style="left:38.6px;top:491.00px;font-size:13px;line-height:16px;color:#111;letter-spacing:-0.04px;">Grape</span>
<span class="t" style="left:159.6px;top:491.00px;font-size:13px;line-height:16px;color:#111;letter-spacing:-0.36px;">$3.19</span>
<span class="t" style="left:216.4px;top:491.00px;font-size:13px;line-height:16px;color:#111;letter-spacing:-0.31px;">$31.90</span>
<span class="t" style="left:321.7px;top:491.00px;font-size:13px;line-height:16px;color:#111;letter-spacing:-0.43px;">$30.31</span>
<span class="t" style="left:115.2px;top:522.00px;font-size:12.5px;line-height:16px;color:#444;letter-spacing:-0.09px;">Retail Prices</span>
<span class="t" style="left:212.7px;top:522.00px;font-size:12.5px;line-height:16px;color:#217346;letter-spacing:-0.47px;font-weight:bold;">Prices</span>
<span class="t" style="left:275.6px;top:522.00px;font-size:12.5px;line-height:16px;color:#444;letter-spacing:-0.15px;">Fruit Balance</span>
<span class="t" style="left:9.5px;top:547.00px;font-size:11px;line-height:14px;color:#505050;letter-spacing:-0.42px;">Ready</span>
<span class="t" style="left:439.4px;top:547.00px;font-size:11px;line-height:14px;color:#505050;letter-spacing:-0.07px;">Average: $26.38</span>
<span class="t" style="left:535.5px;top:547.00px;font-size:11px;line-height:14px;color:#505050;letter-spacing:0.16px;">Count: 15</span>
<span class="t" style="left:601.3px;top:547.00px;font-size:11px;line-height:14px;color:#505050;letter-spacing:-0.16px;">Sum: $395.68</span>
<span class="t" style="left:937.1px;top:547.00px;font-size:11px;line-height:14px;color:#505050;letter-spacing:-0.48px;">100%</span>
<span class="t" style="left:670.9px;top:97.00px;font-size:12px;line-height:15px;color:#555;letter-spacing:0.00px;z-index:12;">+</span>
<span class="t" style="left:670.9px;top:116.00px;font-size:12px;line-height:15px;color:#555;letter-spacing:0.00px;z-index:12;">-</span>
<span class="t" style="left:670.5px;top:135.00px;font-size:12px;line-height:15px;color:#555;letter-spacing:0.00px;z-index:12;">*</span>
<span class="t" style="left:669.8px;top:154.00px;font-size:12px;line-height:15px;color:#555;letter-spacing:0.00px;z-index:12;">/</span>
<span class="t" style="left:670.8px;top:173.00px;font-size:12px;line-height:15px;color:#555;letter-spacing:0.00px;z-index:12;">%</span>
<span class="t" style="left:670.8px;top:192.00px;font-size:12px;line-height:15px;color:#555;letter-spacing:-0.29px;z-index:12;">+%</span>
<span class="t" style="left:670.8px;top:211.00px;font-size:12px;line-height:15px;color:#333;letter-spacing:-0.17px;z-index:12;">-%</span>
<span class="t" style="left:687.0px;top:242.00px;font-size:12px;line-height:15px;color:#575757;letter-spacing:-0.10px;z-index:12;">Subtract percentage</span>
</body></html>
